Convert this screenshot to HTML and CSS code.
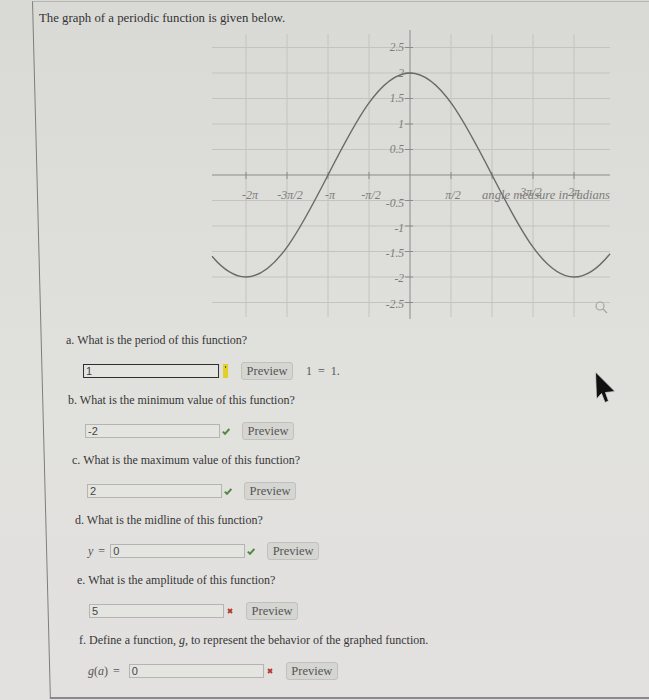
FILE: index.html
```html
<!DOCTYPE html>
<html>
<head>
<meta charset="utf-8">
<link rel="stylesheet" href="styles.css">
</head>
<body>
<div class="frame">
  <div class="inner">
    <p class="title">The graph of a periodic function is given below.</p>

    <svg class="graph" width="425" height="292" viewBox="200 28 425 292" xmlns="http://www.w3.org/2000/svg">
      <g stroke="#c3c3bf" stroke-width="1" fill="none">
        <line x1="212" y1="47.5" x2="610" y2="47.5"/>
        <line x1="212" y1="73" x2="610" y2="73"/>
        <line x1="212" y1="98.5" x2="610" y2="98.5"/>
        <line x1="212" y1="124" x2="610" y2="124"/>
        <line x1="212" y1="149.5" x2="610" y2="149.5"/>
        <line x1="212" y1="200.5" x2="610" y2="200.5"/>
        <line x1="212" y1="226" x2="610" y2="226"/>
        <line x1="212" y1="251.5" x2="610" y2="251.5"/>
        <line x1="212" y1="277" x2="610" y2="277"/>
        <line x1="212" y1="302.5" x2="610" y2="302.5"/>
        <line x1="246" y1="34" x2="246" y2="317"/>
        <line x1="287" y1="34" x2="287" y2="317"/>
        <line x1="328" y1="34" x2="328" y2="317"/>
        <line x1="369" y1="34" x2="369" y2="317"/>
        <line x1="451" y1="34" x2="451" y2="317"/>
        <line x1="492" y1="34" x2="492" y2="317"/>
        <line x1="533" y1="34" x2="533" y2="317"/>
        <line x1="574" y1="34" x2="574" y2="317"/>
      </g>
      <g stroke="#8c8c88" stroke-width="1" fill="none">
        <line x1="212" y1="175" x2="610" y2="175"/>
        <line x1="410" y1="30" x2="410" y2="319"/>
        <line x1="405" y1="47.5" x2="413" y2="47.5"/>
        <line x1="405" y1="73" x2="413" y2="73"/>
        <line x1="405" y1="98.5" x2="413" y2="98.5"/>
        <line x1="405" y1="124" x2="413" y2="124"/>
        <line x1="405" y1="149.5" x2="413" y2="149.5"/>
        <line x1="405" y1="200.5" x2="413" y2="200.5"/>
        <line x1="405" y1="226" x2="413" y2="226"/>
        <line x1="405" y1="251.5" x2="413" y2="251.5"/>
        <line x1="405" y1="277" x2="413" y2="277"/>
        <line x1="405" y1="302.5" x2="413" y2="302.5"/>
        <line x1="246" y1="172" x2="246" y2="179"/>
        <line x1="287" y1="172" x2="287" y2="179"/>
        <line x1="328" y1="172" x2="328" y2="179"/>
        <line x1="369" y1="172" x2="369" y2="179"/>
        <line x1="451" y1="172" x2="451" y2="179"/>
        <line x1="492" y1="172" x2="492" y2="179"/>
        <line x1="533" y1="172" x2="533" y2="179"/>
        <line x1="574" y1="172" x2="574" y2="179"/>
      </g>
      <path d="M212,256.3 C223.3,269.7 234.7,277 246,277 C275.68,277 301.26,227.25 328,175 C354.74,122.75 380.32,73 410,73 C439.68,73 465.26,122.75 492,175 C518.74,227.25 544.32,277 574,277 C586,277 598,268.6 610,253.7" stroke="#6a6a66" stroke-width="1.4" fill="none"/>
      <g font-family="Liberation Serif, serif" font-style="italic" font-size="11.5" fill="#7c7c78" text-anchor="end">
        <text x="404" y="51">2.5</text>
        <text x="404" y="76.5">2</text>
        <text x="404" y="102">1.5</text>
        <text x="404" y="127.5">1</text>
        <text x="404" y="153">0.5</text>
        <text x="404" y="206.5">-0.5</text>
        <text x="404" y="232">-1</text>
        <text x="404" y="256.5">-1.5</text>
        <text x="404" y="281.5">-2</text>
        <text x="404" y="308">-2.5</text>
      </g>
      <g font-family="Liberation Serif, serif" font-style="italic" font-size="12" fill="#7c7c78" text-anchor="middle">
        <text x="250" y="199">-2π</text>
        <text x="290" y="199">-3π/2</text>
        <text x="330" y="199">-π</text>
        <text x="371" y="199">-π/2</text>
        <text x="453" y="199">π/2</text>
        <text x="531" y="196">3π/2</text>
        <text x="574" y="196">2π</text>
      </g>
      <text x="482" y="199" font-family="Liberation Serif, serif" font-style="italic" font-size="12" fill="#7c7c78" textLength="128" lengthAdjust="spacingAndGlyphs">angle measure in radians</text>
      <g stroke="#a4a4a0" stroke-width="1.2" fill="none">
        <circle cx="600" cy="306" r="4"/>
        <line x1="603" y1="309" x2="607" y2="313"/>
      </g>
    </svg>

    <div class="q qa">
      <p class="prompt">a. What is the period of this function?</p>
      <div class="row">
        <span class="field focused">1</span>
        <span class="mark"><span class="warn"><span class="caret"></span></span></span>
        <span class="btn">Preview</span>
        <span class="result">1 = 1.</span>
      </div>
    </div>

    <div class="q qb">
      <p class="prompt">b. What is the minimum value of this function?</p>
      <div class="row">
        <span class="field">-2</span>
        <span class="mark"><svg width="8" height="7" viewBox="0 0 8 7"><path d="M0.8 3.6 L3 5.8 L7.3 1" stroke="#4d8b3d" stroke-width="2" fill="none"/></svg></span>
        <span class="btn">Preview</span>
      </div>
    </div>

    <div class="q qc">
      <p class="prompt">c. What is the maximum value of this function?</p>
      <div class="row">
        <span class="field">2</span>
        <span class="mark"><svg width="8" height="7" viewBox="0 0 8 7"><path d="M0.8 3.6 L3 5.8 L7.3 1" stroke="#4d8b3d" stroke-width="2" fill="none"/></svg></span>
        <span class="btn">Preview</span>
      </div>
    </div>

    <div class="q qd">
      <p class="prompt">d. What is the midline of this function?</p>
      <div class="row">
        <span class="math"><i>y</i> = </span>
        <span class="field">0</span>
        <span class="mark"><svg width="8" height="7" viewBox="0 0 8 7"><path d="M0.8 3.6 L3 5.8 L7.3 1" stroke="#4d8b3d" stroke-width="2" fill="none"/></svg></span>
        <span class="btn">Preview</span>
      </div>
    </div>

    <div class="q qe">
      <p class="prompt">e. What is the amplitude of this function?</p>
      <div class="row">
        <span class="field">5</span>
        <span class="mark"><svg width="6" height="6" viewBox="0 0 6 6"><path d="M1 1 L5 5 M5 1 L1 5" stroke="#b23a2f" stroke-width="1.8"/></svg></span>
        <span class="btn">Preview</span>
      </div>
    </div>

    <div class="q qf">
      <p class="prompt">f. Define a function, <i>g</i>, to represent the behavior of the graphed function.</p>
      <div class="row">
        <span class="math"><i>g</i>(<i>a</i>) = </span>
        <span class="field">0</span>
        <span class="mark"><svg width="6" height="6" viewBox="0 0 6 6"><path d="M1 1 L5 5 M5 1 L1 5" stroke="#b23a2f" stroke-width="1.8"/></svg></span>
        <span class="btn">Preview</span>
      </div>
    </div>
  </div>
</div>

<svg class="cursor" width="24" height="34" viewBox="0 0 24 34" xmlns="http://www.w3.org/2000/svg">
  <path d="M1.5 1 L2.5 28 L7.5 22.5 L11 31.5 L14.5 30 L11.5 21.5 L21 20.5 Z" fill="#111" stroke="#d8d8d4" stroke-width="0.8"/>
</svg>
</body>
</html>
```

FILE: styles.css
```css
html, body {
  margin: 0;
  padding: 0;
}

body {
  width: 649px;
  height: 700px;
  overflow: hidden;
  position: relative;
  background: linear-gradient(#d9dad6, #e1e1dd 60%, #e3e0e0);
  font-family: "Liberation Serif", "Times New Roman", serif;
  color: #383838;
}

.frame {
  margin: 1px 0 0 32px;
  height: 695px;
  border-left: 1px solid #7e7e7a;
  border-top: 1px solid #b4b4b0;
  border-bottom: 2px solid #8c8890;
  transform: skewX(1.47deg);
  transform-origin: 0 0;
}

.inner {
  transform: skewX(-1.47deg);
  transform-origin: 0 0;
}

.title {
  margin: 0;
  padding: 8px 0 0 6px;
  font-size: 12.8px;
  line-height: 16px;
  color: #333;
}

.graph {
  display: block;
  margin: 2px 0 0 167px;
}

.q {
  margin-top: 12px;
}

.prompt {
  margin: 0;
  font-size: 12px;
  line-height: 16px;
  color: #363636;
}

.row {
  display: flex;
  align-items: center;
  height: 18px;
  margin-top: 14px;
}

.field {
  box-sizing: border-box;
  width: 135px;
  height: 14px;
  border: 1px solid #b4b4b0;
  background: #e4e5e1;
  font-family: "Liberation Sans", Arial, sans-serif;
  font-size: 11px;
  line-height: 12px;
  padding-left: 2px;
  color: #444;
}

.field.focused {
  border: 1.5px solid #2e2e2e;
  width: 136px;
}

.mark {
  width: 8px;
  margin-left: 2px;
  display: flex;
  align-items: center;
  justify-content: center;
}

.mark svg {
  display: block;
}

.warn {
  display: block;
  width: 5px;
  height: 14px;
  background: #e3cf26;
  position: relative;
}

.caret {
  position: absolute;
  left: 2px;
  top: 2px;
  width: 1px;
  height: 2px;
  background: #6b5d10;
}

.btn {
  box-sizing: border-box;
  width: 52px;
  height: 18px;
  margin-left: 12px;
  border: 1px solid #c0c0bc;
  border-radius: 3px;
  background: #d5d6d2;
  color: #555;
  font-size: 12.5px;
  display: flex;
  align-items: center;
  justify-content: center;
}

.result {
  margin-left: 13px;
  font-size: 12px;
  color: #555;
  word-spacing: 3px;
}

.math {
  font-size: 12px;
  color: #555;
  white-space: pre;
  word-spacing: 2px;
}

.qa .prompt { padding-left: 33px; }
.qa .row { margin-left: 50px; }

.qb .prompt { padding-left: 35px; }
.qb .row { margin-left: 52px; }

.qc .prompt { padding-left: 39px; }
.qc .row { margin-left: 54px; }

.qd .prompt { padding-left: 42px; }
.qd .row { margin-left: 55px; }

.qe .prompt { padding-left: 44px; }
.qe .row { margin-left: 56px; }

.qf .prompt { padding-left: 46px; }
.qf .row { margin-left: 55px; }
.qf .math { margin-right: 4px; }

.cursor {
  position: absolute;
  left: 594px;
  top: 371px;
}
```
